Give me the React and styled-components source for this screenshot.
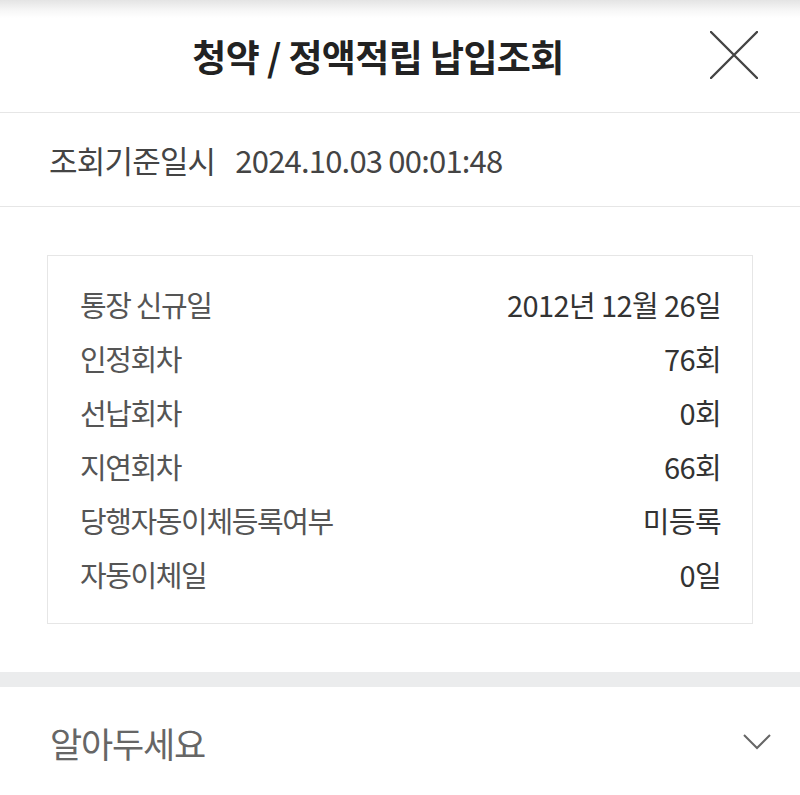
import React from 'react';
import styled, { createGlobalStyle } from 'styled-components';

const GlobalStyle = createGlobalStyle`
  html, body {
    margin: 0;
    padding: 0;
    background: #fff;
  }
  body {
    font-family: "Noto Sans CJK KR", "Noto Sans", sans-serif;
  }
`;

const Page = styled.div`
  width: 800px;
  height: 795px;
  overflow: hidden;
  background: #fff;
  display: flex;
  flex-direction: column;
`;

const Header = styled.header`
  position: relative;
  height: 113px;
  flex-shrink: 0;
  box-sizing: border-box;
  display: flex;
  align-items: center;
  padding-right: 44px;
  background: linear-gradient(#e4e4e4 0, #f6f6f6 10px, #fff 18px);
  border-bottom: 1px solid #e6e6e6;
`;

const Title = styled.h1`
  flex: 1;
  margin: 0;
  text-align: center;
  font-size: 37px;
  font-weight: 700;
  letter-spacing: -0.6px;
  color: #222;
`;

const CloseButton = styled.button`
  position: absolute;
  right: 41px;
  top: 30px;
  width: 50px;
  height: 50px;
  padding: 0;
  border: 0;
  background: none;
  display: flex;
  align-items: center;
  justify-content: center;
`;

const InfoBar = styled.div`
  height: 94px;
  flex-shrink: 0;
  box-sizing: border-box;
  display: flex;
  align-items: center;
  gap: 20px;
  padding-left: 49px;
  border-bottom: 1px solid #e6e6e6;
  font-size: 31px;
  letter-spacing: -0.8px;
  color: #444;
`;

const CardSection = styled.section`
  padding: 48px 47px;
`;

const Card = styled.dl`
  margin: 0;
  border: 1px solid #e6e6e6;
  padding: 21px 31px 22px 32px;
`;

const Row = styled.div`
  height: 54px;
  display: flex;
  align-items: center;
  justify-content: space-between;
  font-size: 29px;
  letter-spacing: -1.4px;
`;

const Label = styled.dt`
  color: #555;
`;

const Value = styled.dd`
  margin: 0;
  color: #333;
  letter-spacing: -0.6px;
`;

const Band = styled.div`
  height: 15px;
  flex-shrink: 0;
  background: #ebeced;
`;

const Accordion = styled.div`
  height: 110px;
  flex-shrink: 0;
  display: flex;
  align-items: center;
  justify-content: space-between;
  padding: 0 28px 0 50px;
  font-size: 35px;
  letter-spacing: -1.2px;
  color: #666;
`;

const rows = [
  ['통장 신규일', '2012년 12월 26일'],
  ['인정회차', '76회'],
  ['선납회차', '0회'],
  ['지연회차', '66회'],
  ['당행자동이체등록여부', '미등록'],
  ['자동이체일', '0일'],
];

const App = () => (
  <Page>
    <GlobalStyle />
    <Header>
      <Title>청약 / 정액적립 납입조회</Title>
      <CloseButton aria-label="닫기">
        <svg width="48" height="48" viewBox="0 0 48 48">
          <path d="M1 1 L47 47 M47 1 L1 47" stroke="#444" strokeWidth="2.4" strokeLinecap="round" fill="none" />
        </svg>
      </CloseButton>
    </Header>

    <InfoBar>
      <span>조회기준일시</span>
      <span>2024.10.03 00:01:48</span>
    </InfoBar>

    <CardSection>
      <Card>
        {rows.map(([label, value]) => (
          <Row key={label}>
            <Label>{label}</Label>
            <Value>{value}</Value>
          </Row>
        ))}
      </Card>
    </CardSection>

    <Band />

    <Accordion>
      <span>알아두세요</span>
      <svg width="30" height="18" viewBox="0 0 30 18">
        <path d="M2 2 L15 15 L28 2" stroke="#666" strokeWidth="2" fill="none" />
      </svg>
    </Accordion>
  </Page>
);

export default App;
